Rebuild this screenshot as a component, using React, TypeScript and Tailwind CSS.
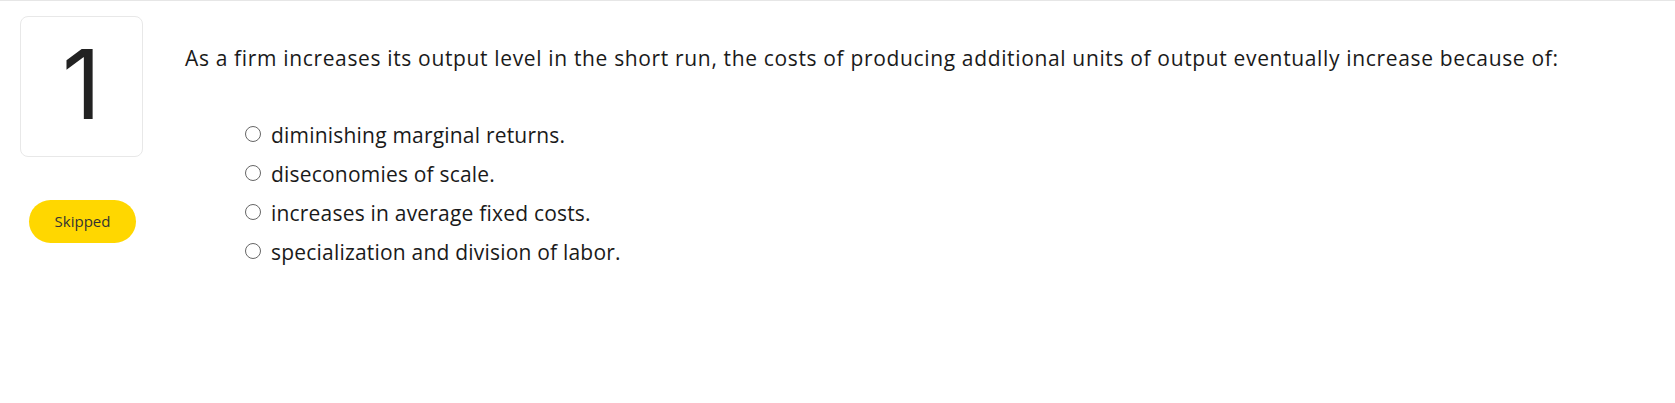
import React from 'react';

const OPTIONS = [
  'diminishing marginal returns.',
  'diseconomies of scale.',
  'increases in average fixed costs.',
  'specialization and division of labor.',
];

export default function App() {
  return (
    <div className="w-[1675px] h-[403px] bg-white border-t border-[#e6e6e6] text-[#1a1a1a] font-['Open_Sans',sans-serif]">
      <div className="flex pt-[15px]">
        <div className="w-[185px] shrink-0 pl-[20px]">
          <div className="w-[123px] h-[141px] rounded-[8px] border border-[#e8e8e8] flex items-center justify-center">
            <span className="text-[96px] leading-none text-[#222] font-['Inter',sans-serif] font-normal -mt-[6px]">1</span>
          </div>
          <div className="mt-[43px] ml-[9px] w-[107px] h-[43px] rounded-full bg-[#ffd700] flex items-center justify-center text-[15px] text-[#333]">
            Skipped
          </div>
        </div>
        <div className="pt-[27px]">
          <p className="text-[21px] leading-[30px] tracking-[0.65px]">
            As a firm increases its output level in the short run, the costs of producing additional units of output eventually increase because of:
          </p>
          <ul className="mt-[48px] ml-[60px] flex flex-col gap-[9px]">
            {OPTIONS.map((o) => (
              <li key={o} className="flex items-center gap-[10px] h-[30px]">
                <span className="w-[16px] h-[16px] rounded-full border-[1.5px] border-[#666] -mt-[4px]" />
                <span className="text-[21px] tracking-[0.2px]">{o}</span>
              </li>
            ))}
          </ul>
        </div>
      </div>
    </div>
  );
}
